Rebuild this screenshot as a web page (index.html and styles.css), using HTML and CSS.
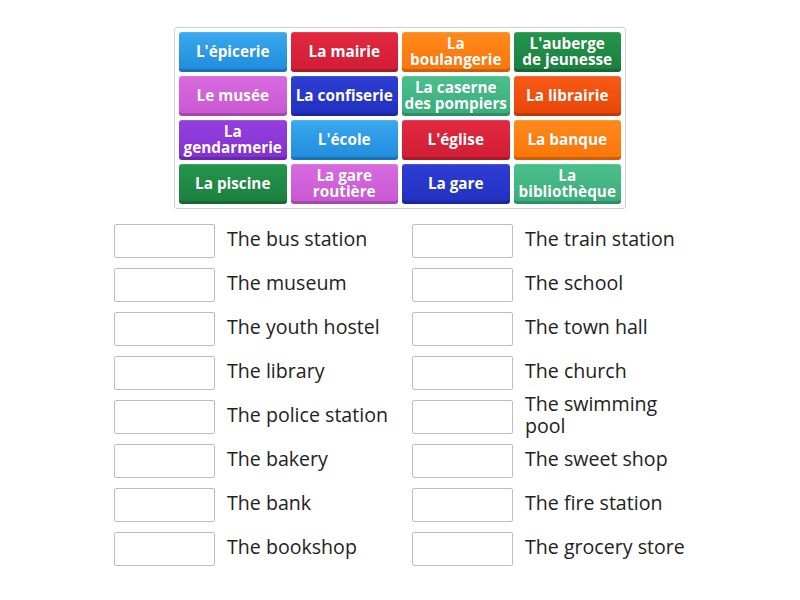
FILE: index.html
```html
<!DOCTYPE html>
<html lang="fr">
<head>
<meta charset="utf-8">
<title>Match</title>
<link rel="stylesheet" href="styles.css">
</head>
<body>
<div class="tiles">
  <div class="tile blue">L'épicerie</div>
  <div class="tile red">La mairie</div>
  <div class="tile orange">La<br>boulangerie</div>
  <div class="tile green">L'auberge<br>de jeunesse</div>
  <div class="tile orchid">Le musée</div>
  <div class="tile navy">La confiserie</div>
  <div class="tile teal">La caserne<br>des pompiers</div>
  <div class="tile vermilion">La librairie</div>
  <div class="tile purple">La<br>gendarmerie</div>
  <div class="tile blue">L'école</div>
  <div class="tile red">L'église</div>
  <div class="tile orange">La banque</div>
  <div class="tile green">La piscine</div>
  <div class="tile orchid">La gare<br>routière</div>
  <div class="tile navy">La gare</div>
  <div class="tile teal">La<br>bibliothèque</div>
</div>
<div class="answers">
  <div class="item"><div class="slot"></div><div class="label">The bus station</div></div>
  <div class="item"><div class="slot"></div><div class="label">The train station</div></div>
  <div class="item"><div class="slot"></div><div class="label">The museum</div></div>
  <div class="item"><div class="slot"></div><div class="label">The school</div></div>
  <div class="item"><div class="slot"></div><div class="label">The youth hostel</div></div>
  <div class="item"><div class="slot"></div><div class="label">The town hall</div></div>
  <div class="item"><div class="slot"></div><div class="label">The library</div></div>
  <div class="item"><div class="slot"></div><div class="label">The church</div></div>
  <div class="item"><div class="slot"></div><div class="label">The police station</div></div>
  <div class="item"><div class="slot"></div><div class="label">The swimming pool</div></div>
  <div class="item"><div class="slot"></div><div class="label">The bakery</div></div>
  <div class="item"><div class="slot"></div><div class="label">The sweet shop</div></div>
  <div class="item"><div class="slot"></div><div class="label">The bank</div></div>
  <div class="item"><div class="slot"></div><div class="label">The fire station</div></div>
  <div class="item"><div class="slot"></div><div class="label">The bookshop</div></div>
  <div class="item"><div class="slot"></div><div class="label">The grocery store</div></div>
</div>
</body>
</html>
```

FILE: styles.css
```css
html, body {
  margin: 0;
  padding: 0;
  background: #fff;
}
body {
  font-family: "Open Sans", "DejaVu Sans", sans-serif;
  padding-top: 27px;
}
.tiles {
  width: 442px;
  margin: 0 auto;
  padding: 4px;
  border: 1px solid #cfcfcf;
  border-radius: 3px;
  display: grid;
  grid-template-columns: repeat(4, 1fr);
  grid-auto-rows: 40px;
  gap: 4px;
}
.tile {
  display: flex;
  align-items: center;
  justify-content: center;
  text-align: center;
  color: #fff;
  font-weight: 700;
  font-size: 15.3px;
  line-height: 16px;
  border-radius: 3px;
  padding-bottom: 3px;
  box-sizing: border-box;
  text-shadow: 0 0 1px rgba(0,0,0,0.15);
  box-shadow: inset 0 -3px 0 rgba(0,0,0,0.18), inset 0 1px 0 rgba(255,255,255,0.12);
}
.blue { background: linear-gradient(#3aa9ee, #1f8bdc); }
.red { background: linear-gradient(#e3293f, #cf1d35); }
.orange { background: linear-gradient(#ff8a1c, #fb7408); }
.green { background: linear-gradient(#23954b, #1b7f3f); }
.orchid { background: linear-gradient(#d86adf, #c957d2); }
.navy { background: linear-gradient(#2e3ed3, #2230c0); }
.teal { background: linear-gradient(#4bbf8c, #38ad7b); }
.vermilion { background: linear-gradient(#f85a14, #e9450a); }
.purple { background: linear-gradient(#9440e0, #8330d3); }

.answers {
  margin: 15px 0 0 114px;
  width: 596px;
  display: grid;
  grid-template-columns: 298px 298px;
  grid-auto-rows: 34px;
  row-gap: 10px;
}
.item {
  display: flex;
  align-items: center;
  gap: 12px;
}
.slot {
  flex: none;
  width: 101px;
  height: 34px;
  box-sizing: border-box;
  border: 1px solid #bdbdbd;
  border-radius: 2px;
  background: #fff;
}
.label {
  width: 170px;
  font-size: 19.6px;
  line-height: 22px;
  padding-bottom: 4px;
  color: #222;
}
```
